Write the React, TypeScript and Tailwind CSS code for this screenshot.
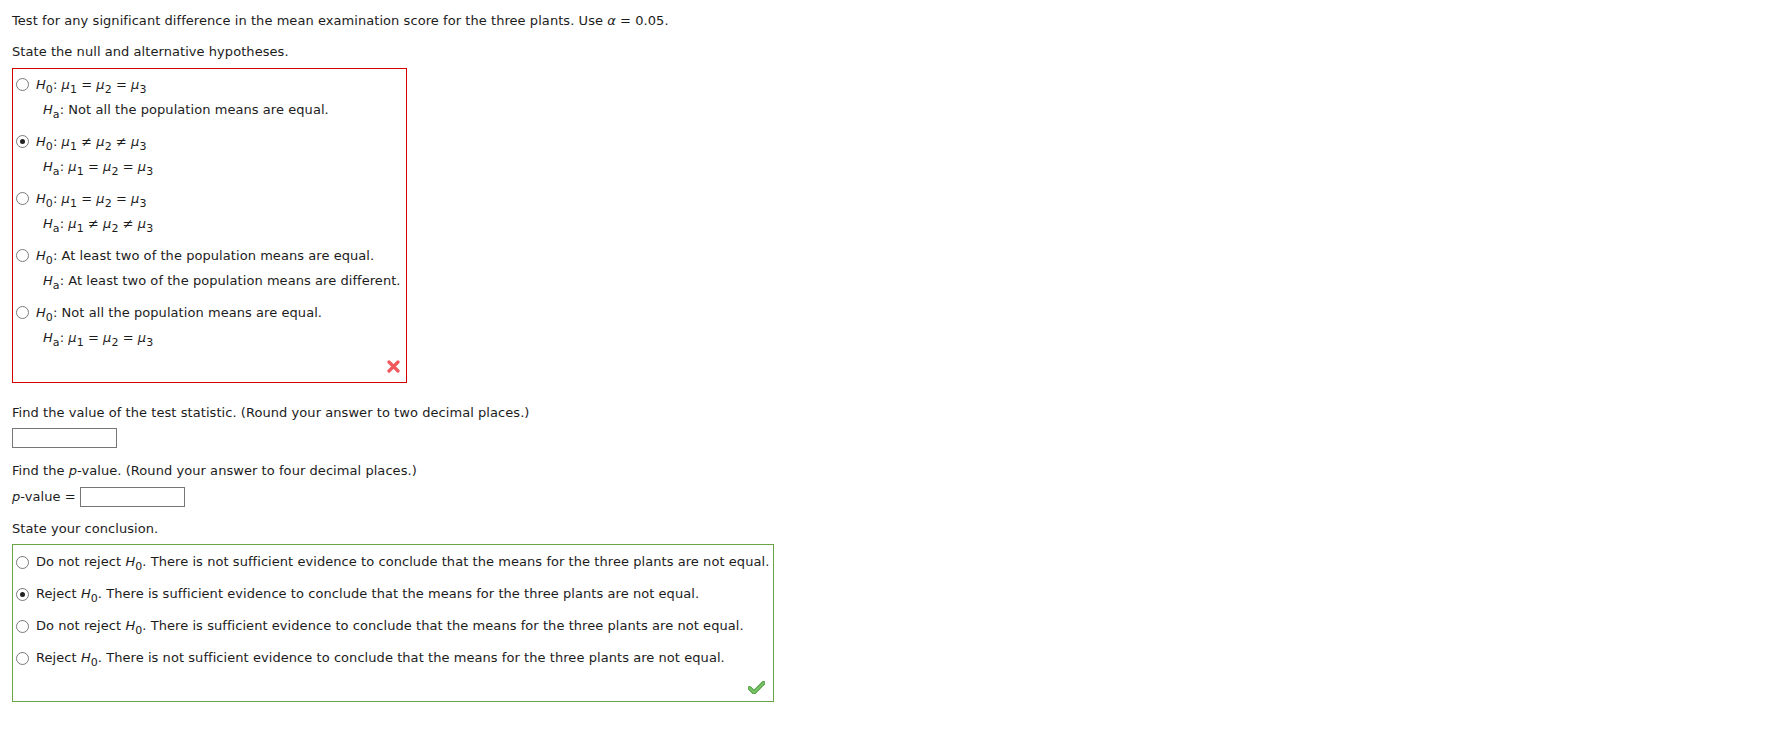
import { ReactNode } from "react";

const Sub = ({ children }: { children: ReactNode }) => (
  <sub className="relative top-[4px] text-[11px] not-italic">{children}</sub>
);

const H = ({ s }: { s: string }) => (
  <>
    <i>H</i>
    <Sub>{s}</Sub>
  </>
);

const Mu = ({ s }: { s: string }) => (
  <>
    <i>μ</i>
    <Sub>{s}</Sub>
  </>
);

const Radio = ({ checked }: { checked?: boolean }) => (
  <span className="flex h-[13px] w-[13px] shrink-0 items-center justify-center rounded-full border border-[#7a7a7a] bg-white">
    {checked && <span className="h-[5px] w-[5px] rounded-full bg-[#222]" />}
  </span>
);

const Means = ({ op }: { op: string }) => (
  <>
    <Mu s="1" /> {op} <Mu s="2" /> {op} <Mu s="3" />
  </>
);

const hypotheses: { h0: ReactNode; ha: ReactNode; checked?: boolean }[] = [
  {
    h0: <Means op="=" />,
    ha: <>Not all the population means are equal.</>,
  },
  { h0: <Means op="≠" />, ha: <Means op="=" />, checked: true },
  { h0: <Means op="=" />, ha: <Means op="≠" /> },
  {
    h0: <>At least two of the population means are equal.</>,
    ha: <>At least two of the population means are different.</>,
  },
  {
    h0: <>Not all the population means are equal.</>,
    ha: <Means op="=" />,
  },
];

const conclusions = [
  {
    verb: "Do not reject",
    rest: "There is not sufficient evidence to conclude that the means for the three plants are not equal.",
  },
  {
    verb: "Reject",
    rest: "There is sufficient evidence to conclude that the means for the three plants are not equal.",
    checked: true,
  },
  {
    verb: "Do not reject",
    rest: "There is sufficient evidence to conclude that the means for the three plants are not equal.",
  },
  {
    verb: "Reject",
    rest: "There is not sufficient evidence to conclude that the means for the three plants are not equal.",
  },
];

const CrossMark = () => (
  <svg width="13" height="13" viewBox="0 0 13 13">
    <path
      d="M2 2 L11 11 M11 2 L2 11"
      stroke="#f0595e"
      strokeWidth="3.2"
      strokeLinecap="round"
    />
  </svg>
);

const CheckMark = () => (
  <svg width="17" height="13" viewBox="0 0 17 13">
    <path
      d="M1.5 7 L6 11.5 L15.5 2"
      fill="none"
      stroke="#4f9a3f"
      strokeWidth="4"
      strokeLinejoin="round"
      strokeLinecap="round"
    />
    <path
      d="M1.5 7 L6 11.5 L15.5 2"
      fill="none"
      stroke="#7cc66a"
      strokeWidth="2"
      strokeLinejoin="round"
      strokeLinecap="round"
    />
  </svg>
);

const TextInput = () => (
  <div className="h-[20px] w-[105px] border border-[#767676] bg-white" />
);

export default function App() {
  return (
    <div
      className="min-h-screen bg-white pl-[12px] pt-[11px] text-[13px] leading-[20px] tracking-[0.06px] text-[#1c1c1c]"
      style={{ fontFamily: '"DejaVu Sans", Verdana, sans-serif' }}
    >
      <p>
        Test for any significant difference in the mean examination score for the three plants. Use{" "}
        <i>α</i> = 0.05.
      </p>
      <p className="mt-[11px]">State the null and alternative hypotheses.</p>

      <div className="mt-[6px] flex w-[395px] flex-col border border-[#d40000] pt-[3px] whitespace-nowrap">
        {hypotheses.map((h, i) => (
          <div key={i} className="mb-[7px] flex flex-col pl-[3px]">
            <div className="flex h-[25px] items-center gap-[7px]">
              <Radio checked={h.checked} />
              <span>
                <H s="0" />: {h.h0}
              </span>
            </div>
            <div className="flex h-[25px] items-center pl-[27px]">
              <span>
                <H s="a" />: {h.ha}
              </span>
            </div>
          </div>
        ))}
        <div className="flex justify-end pr-[6px] pb-[9px] pt-[3px]">
          <CrossMark />
        </div>
      </div>

      <p className="mt-[20px]">
        Find the value of the test statistic. (Round your answer to two decimal places.)
      </p>
      <div className="mt-[5px]">
        <TextInput />
      </div>

      <p className="mt-[13px]">
        Find the <i>p</i>-value. (Round your answer to four decimal places.)
      </p>
      <div className="mt-[6px] flex items-center gap-[4px]">
        <span>
          <i>p</i>-value =
        </span>
        <TextInput />
      </div>

      <p className="mt-[12px]">State your conclusion.</p>
      <div className="mt-[5px] flex w-[762px] flex-col border border-[#6aa343] pt-[1px] whitespace-nowrap">
        {conclusions.map((c, i) => (
          <div key={i} className="flex h-[32px] items-center gap-[7px] pl-[3px]">
            <Radio checked={c.checked} />
            <span>
              {c.verb} <H s="0" />. {c.rest}
            </span>
          </div>
        ))}
        <div className="flex justify-end pr-[8px] pb-[7px] pt-[7px]">
          <CheckMark />
        </div>
      </div>
    </div>
  );
}
